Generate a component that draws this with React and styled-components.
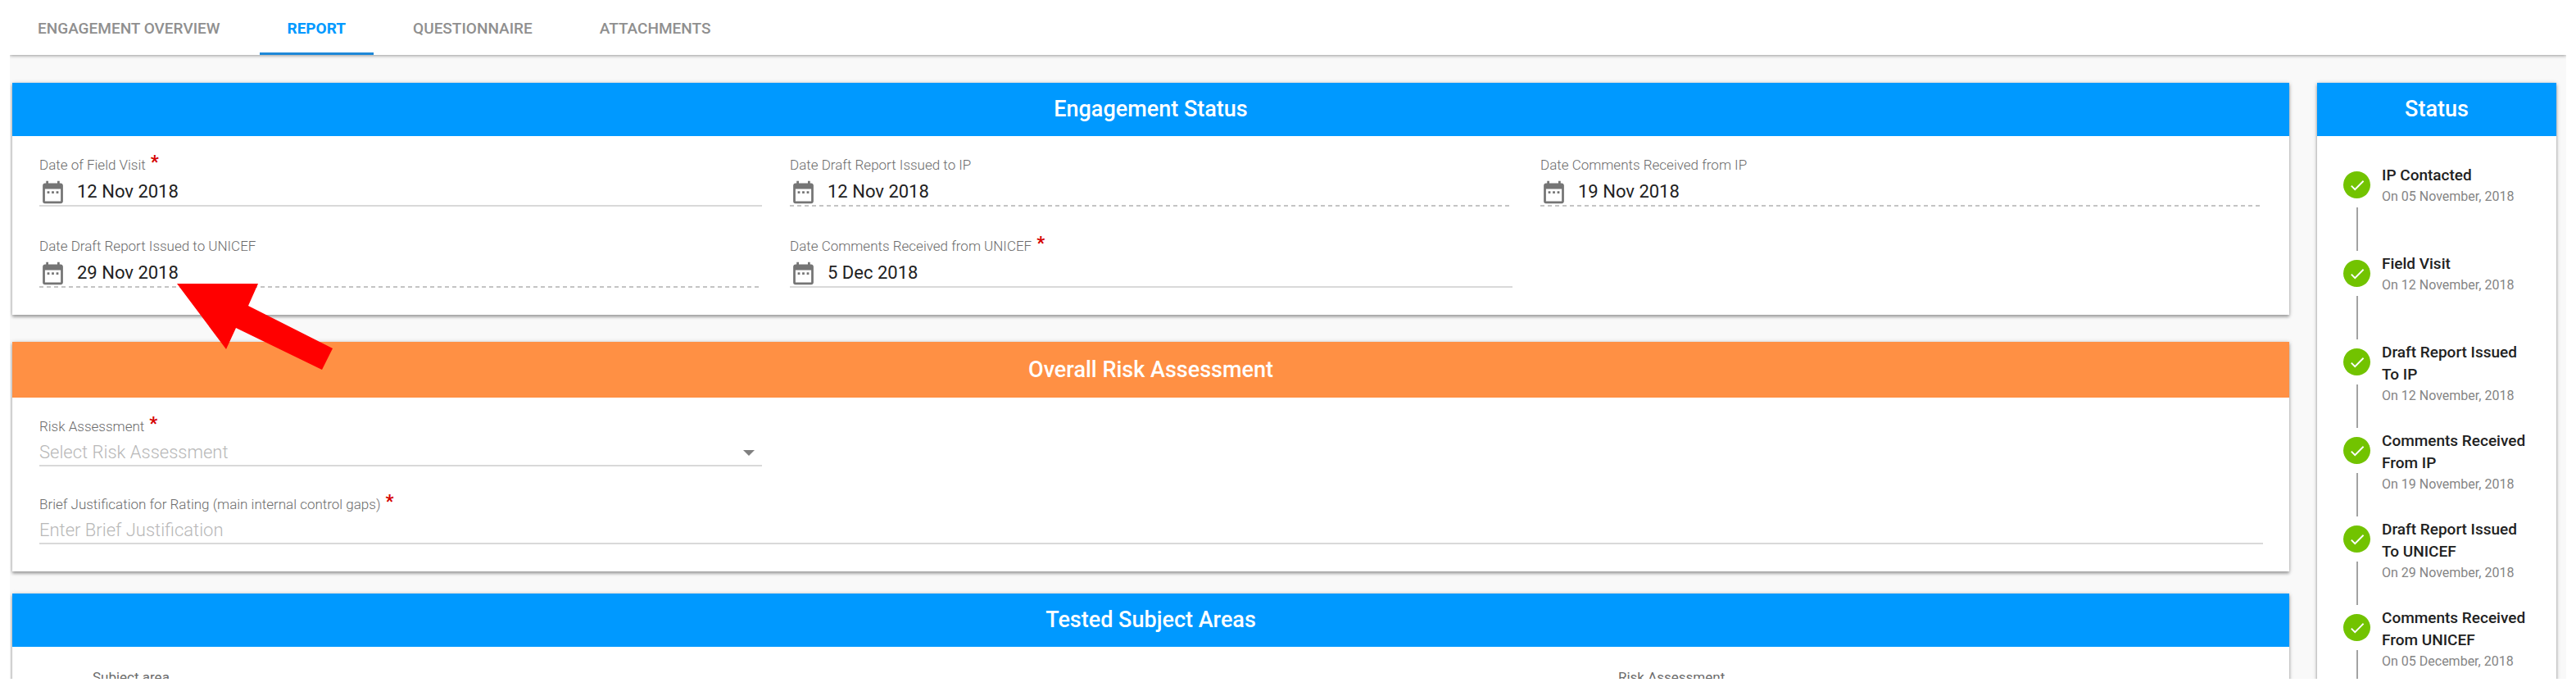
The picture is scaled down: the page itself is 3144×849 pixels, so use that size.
import { useId } from 'react';
import styled, { createGlobalStyle } from 'styled-components';
import { MdCheck, MdDateRange } from 'react-icons/md';

const GlobalStyle = createGlobalStyle`
  * {
    box-sizing: border-box;
  }
  body {
    margin: 0;
    background: #fff;
    color: #212121;
    font-family: Roboto, 'Liberation Sans', sans-serif;
  }
`;

const Page = styled.div`
  position: relative;
  display: flex;
  flex-direction: column;
  height: calc(100vh - 21px);
  margin: 0 12px;
  overflow: hidden;
  background: #f9f9f9;
`;

const TabBar = styled.nav`
  position: relative;
  display: flex;
  flex-shrink: 0;
  gap: 14px;
  height: 67px;
  background: #fff;
  box-shadow: 0 1px 4px rgba(0, 0, 0, 0.4);
`;

const Tab = styled.button`
  padding: 6px 34px 0;
  border: 0;
  border-bottom: 3px solid ${({ $active }) => ($active ? '#1e88d8' : 'transparent')};
  background: none;
  color: ${({ $active }) => ($active ? '#0099ff' : '#8f8f8f')};
  font-family: inherit;
  font-size: 19px;
  font-weight: ${({ $active }) => ($active ? 700 : 500)};
  line-height: 24px;
  text-transform: uppercase;
`;

const Content = styled.div`
  display: flex;
  align-items: flex-start;
  gap: 34px;
  padding: 34px 12px 0 3px;
`;

const Main = styled.main`
  flex: 1;
  min-width: 0;
`;

const Card = styled.section`
  margin-bottom: ${({ $compact }) => ($compact ? 27 : 33)}px;
  background: #fff;
  box-shadow: 0 3px 3px rgba(0, 0, 0, 0.2), 0 1px 5px rgba(0, 0, 0, 0.3);
`;

const CardTitle = styled.h2`
  margin: 0;
  padding: ${({ $tone }) => ($tone === 'orange' ? '18px' : '16px 16px 17px')};
  background: ${({ $tone }) => ($tone === 'orange' ? '#ff9044' : '#0099ff')};
  color: #fff;
  font-size: 27px;
  font-weight: 500;
  line-height: 32px;
  text-align: center;
`;

const FieldGrid = styled.div`
  display: grid;
  grid-template-columns: repeat(3, 1fr);
  gap: ${({ $compact }) => ($compact ? 35 : 37)}px 34px;
  padding: 24px 32px 33px 33px;
`;

const FieldBox = styled.div`
  display: flex;
  flex-direction: column;
  grid-column: ${({ $wide }) => ($wide ? '1 / -1' : 'auto')};
`;

const Label = styled.label`
  height: 24px;
  color: #6b6b6b;
  font-size: 17px;
  font-weight: 300;
  line-height: 22px;
`;

const Required = styled.span`
  margin-left: 6px;
  color: #d50000;
  font-size: 22px;
  font-weight: 700;
  line-height: 16px;
  vertical-align: 2px;
`;

const InputRow = styled.div`
  position: relative;
  display: flex;
  align-items: center;
  gap: 13px;
  height: ${({ $compact }) => ($compact ? 36 : 38)}px;
  padding-top: 2px;
  background-image: ${({ $readOnly }) =>
    $readOnly
      ? 'repeating-linear-gradient(90deg, #c4c4c4 0 5px, transparent 5px 9px)'
      : 'linear-gradient(#d9d9d9, #d9d9d9)'};
  background-position: left bottom;
  background-repeat: no-repeat;
  background-size: 100% 2px;
  color: #757575;

  svg {
    flex-shrink: 0;
  }
`;

const Input = styled.input`
  flex: 1;
  min-width: 0;
  height: 28px;
  padding: 0;
  border: 0;
  outline: 0;
  background: none;
  color: #212121;
  font-family: inherit;
  font-size: 22px;
  line-height: 28px;

  &::placeholder {
    color: #b8b8b8;
    font-weight: 300;
    opacity: 1;
  }
`;

const Select = styled.select`
  flex: 1;
  height: 28px;
  padding: 0;
  border: 0;
  outline: 0;
  appearance: none;
  background: none;
  color: #b8b8b8;
  font-family: inherit;
  font-size: 22px;
  font-weight: 300;
  line-height: 28px;
`;

const Caret = styled.svg`
  position: absolute;
  right: 9px;
  top: 16px;
  pointer-events: none;
`;

const AreaTable = styled.table`
  width: 100%;
  border-collapse: collapse;
  table-layout: fixed;

  th {
    padding: 27px 0 20px 98px;
    color: #6b6b6b;
    font-size: 17px;
    font-weight: 400;
    line-height: 20px;
    text-align: left;
  }
  th:first-child {
    width: 67%;
  }
`;

const Side = styled.aside`
  width: 292px;
  background: #fff;
  box-shadow: 0 3px 3px rgba(0, 0, 0, 0.2), 0 1px 5px rgba(0, 0, 0, 0.3);
`;

const Steps = styled.ol`
  margin: 0;
  padding: 34px 33px 0 32px;
  list-style: none;
`;

const Step = styled.li`
  display: flex;
  gap: 14px;
  height: 108px;
`;

const Track = styled.div`
  display: flex;
  flex-direction: column;
  align-items: center;
  gap: 11px;
  padding: 9px 0 2px;
`;

const Badge = styled.span`
  display: flex;
  align-items: center;
  justify-content: center;
  width: 33px;
  height: 33px;
  border-radius: 50%;
  background: #72c300;
  color: #fff;
`;

const Connector = styled.span`
  flex: 1;
  width: 2px;
  background: #a3a3a3;
`;

const StepTitle = styled.div`
  font-size: 19px;
  font-weight: 500;
  line-height: 27px;
`;

const StepDate = styled.div`
  color: #858585;
  font-size: 16px;
  line-height: 26px;
`;

const Pointer = styled.svg`
  position: absolute;
  left: 204px;
  top: 346px;
  pointer-events: none;
`;

const tabs = ['Engagement Overview', 'Report', 'Questionnaire', 'Attachments'];

const dates = [
  { label: 'Date of Field Visit', value: '12 Nov 2018', required: true },
  { label: 'Date Draft Report Issued to IP', value: '12 Nov 2018', readOnly: true },
  { label: 'Date Comments Received from IP', value: '19 Nov 2018', readOnly: true },
  { label: 'Date Draft Report Issued to UNICEF', value: '29 Nov 2018', readOnly: true },
  { label: 'Date Comments Received from UNICEF', value: '5 Dec 2018', required: true },
];

const steps = [
  { title: 'IP Contacted', date: 'On 05 November, 2018' },
  { title: 'Field Visit', date: 'On 12 November, 2018' },
  { title: 'Draft Report Issued To IP', date: 'On 12 November, 2018' },
  { title: 'Comments Received From IP', date: 'On 19 November, 2018' },
  { title: 'Draft Report Issued To UNICEF', date: 'On 29 November, 2018' },
  { title: 'Comments Received From UNICEF', date: 'On 05 December, 2018' },
];

const FieldLabel = ({ id, required, children }) => (
  <Label htmlFor={id}>
    {children}
    {required && <Required>*</Required>}
  </Label>
);

const DateField = ({ label, value, required, readOnly }) => {
  const id = useId();
  return (
    <FieldBox>
      <FieldLabel id={id} required={required}>
        {label}
      </FieldLabel>
      <InputRow $readOnly={readOnly}>
        <MdDateRange size={33} />
        <Input id={id} defaultValue={value} readOnly={readOnly} />
      </InputRow>
    </FieldBox>
  );
};

const App = () => {
  return (
    <>
      <GlobalStyle />
      <Page>
        <TabBar>
          {tabs.map((tab) => (
            <Tab key={tab} type="button" $active={tab === 'Report'}>
              {tab}
            </Tab>
          ))}
        </TabBar>

        <Content>
          <Main>
            <Card>
              <CardTitle>Engagement Status</CardTitle>
              <FieldGrid>
                {dates.map((item) => (
                  <DateField key={item.label} {...item} />
                ))}
              </FieldGrid>
            </Card>

            <Card $compact>
              <CardTitle $tone="orange">Overall Risk Assessment</CardTitle>
              <FieldGrid $compact>
                <FieldBox>
                  <FieldLabel id="risk" required>
                    Risk Assessment
                  </FieldLabel>
                  <InputRow $compact>
                    <Select id="risk" defaultValue="">
                      <option value="">Select Risk Assessment</option>
                      <option value="low">Low</option>
                      <option value="high">High</option>
                    </Select>
                    <Caret width="14" height="7" viewBox="0 0 14 7">
                      <path d="M0 0h14L7 7z" fill="#808080" />
                    </Caret>
                  </InputRow>
                </FieldBox>
                <FieldBox $wide>
                  <FieldLabel id="justification" required>
                    Brief Justification for Rating (main internal control gaps)
                  </FieldLabel>
                  <InputRow $compact>
                    <Input id="justification" placeholder="Enter Brief Justification" />
                  </InputRow>
                </FieldBox>
              </FieldGrid>
            </Card>

            <Card>
              <CardTitle>Tested Subject Areas</CardTitle>
              <AreaTable>
                <thead>
                  <tr>
                    <th>Subject area</th>
                    <th>Risk Assessment</th>
                  </tr>
                </thead>
              </AreaTable>
            </Card>
          </Main>

          <Side>
            <CardTitle>Status</CardTitle>
            <Steps>
              {steps.map(({ title, date }) => (
                <Step key={title}>
                  <Track>
                    <Badge>
                      <MdCheck size={22} />
                    </Badge>
                    <Connector />
                  </Track>
                  <div>
                    <StepTitle>{title}</StepTitle>
                    <StepDate>{date}</StepDate>
                  </div>
                </Step>
              ))}
            </Steps>
          </Side>
        </Content>

        <Pointer width="190" height="105" viewBox="0 0 190 105">
          <path d="M0 0H99L87 27L190 79L177 105L72 54L60 80Z" fill="#ff0000" />
        </Pointer>
      </Page>
    </>
  );
};

export default App;
